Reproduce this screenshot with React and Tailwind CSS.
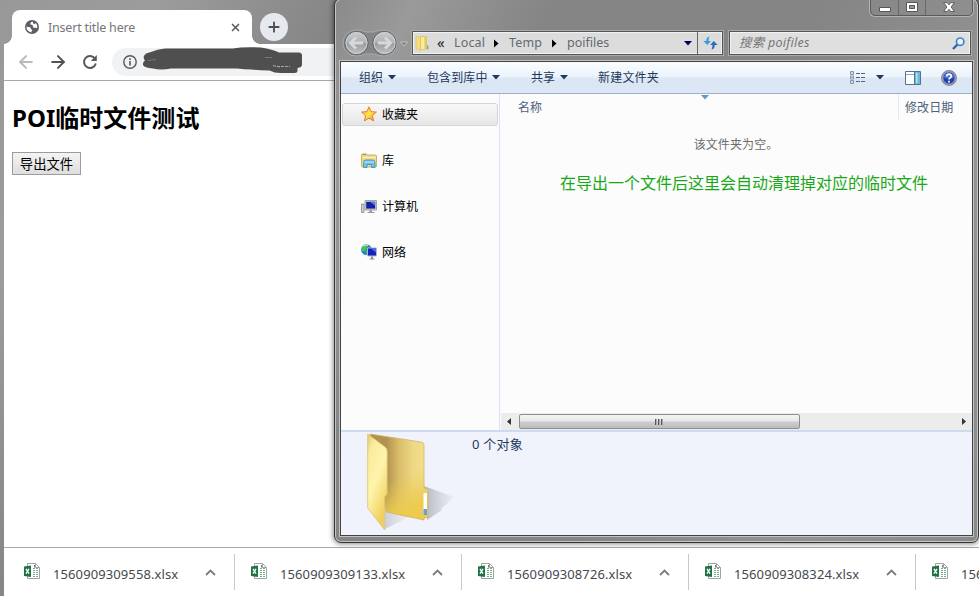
import { ArrowLeft, ArrowRight, Plus, X } from "lucide-react";

const downloads = [
  "1560909309558.xlsx",
  "1560909309133.xlsx",
  "1560909308726.xlsx",
  "1560909308324.xlsx",
  "1560909307915.xlsx",
];

const places = [
  { label: "收藏夹", icon: StarIcon, active: true },
  { label: "库", icon: LibraryIcon },
  { label: "计算机", icon: ComputerIcon },
  { label: "网络", icon: NetworkIcon },
];

/* ---------- icons ---------- */

function Caret({ className = "" }) {
  return (
    <svg className={`w-2 h-[5px] shrink-0 ${className}`} viewBox="0 0 8 5">
      <path d="M0 0h8L4 4.500z" fill="currentColor" />
    </svg>
  );
}

function CrumbArrow() {
  return (
    <svg className="w-[5px] h-[9px] shrink-0" viewBox="0 0 5 9">
      <path d="M0 0.5v8L4.5 4.5z" fill="#000" />
    </svg>
  );
}

function GlobeIcon() {
  return (
    <svg className="w-[14px] h-[14px] shrink-0" viewBox="0 0 14 14">
      <circle cx="7" cy="7" r="7" fill="#5a5f64" />
      <path d="M7.500 1.600C6 2.200 5 3.200 5.400 4.300c.6 1 1.900.3 2.400 1.100.5.8-.2 1.600.6 2.200.8.500 1.700-.2 2.600.2.7.3 1.100.4 1.300 0A5.600 5.600 0 0 0 10.800 3L9.600 4.300 8.300 3.600z" fill="#fff" />
      <path d="M1.500 6.400c1.200.7 2.900.1 3.800 1 .7.8.4 1.500 1.200 2 .9.500 1 1 .3 1.500-.5.400-.4.900-.3 1.500A5.500 5.500 0 0 1 1.500 6.400z" fill="#fff" />
    </svg>
  );
}

function ReloadIcon() {
  return (
    <svg className="w-[16px] h-[16px] shrink-0" viewBox="0 0 16 16" fill="none">
      <path d="M13 4.600A6 6 0 1 0 13.800 9.600" stroke="#55595e" strokeWidth="2" />
      <path d="M14.800 1v6H8.800z" fill="#55595e" />
    </svg>
  );
}

function InfoIcon() {
  return (
    <svg className="w-[14px] h-[14px] shrink-0" viewBox="0 0 14 14">
      <circle cx="7" cy="7" r="6.2" fill="none" stroke="#55595e" strokeWidth="1.4" />
      <path d="M6.2 6.1h1.6v4.4H6.2zM6.2 3.3h1.6v1.6H6.2z" fill="#55595e" />
    </svg>
  );
}

// marker scribble that hides the address
function Scribble() {
  return (
    <svg className="w-[160px] h-[27px] shrink-0" viewBox="0 0 160 27">
      <path
        d="M1 9Q2 6 8 5q6-3 14-3.500h68Q100-.5 118 .5q12 2 18 5h19.500q3.500 0 3.500 3v9q0 3-4.500 3.500v2.500q0 2.500-3 2.500h-14q-6 0-11-2.500-12 0-18-1-8 0-14-1H28q-10 2-18 0-9-1-10-3.500-.5-3 2-4.500-2-2-1-4.500z"
        fill="#4f4f4f"
      />
      <path d="M5 13.500l8-1M122 10.500h7" stroke="#7d7d7d" strokeWidth="0.9" fill="none" />
      <path d="M130 18.500q4 1.200 8 1h9" stroke="#a5a8ab" strokeWidth="1.200" strokeDasharray="3 1" fill="none" />
    </svg>
  );
}

function ExcelIcon() {
  return (
    <svg className="w-4 h-4 shrink-0" viewBox="0 0 16 16">
      <path d="M3.500.5h8l4 4v11h-12z" fill="#fff" stroke="#a3a3a3" />
      <path d="M11.500.5v4h4" fill="none" stroke="#a3a3a3" />
      <path d="M9 5.500h2M12 5.500h2M9 7.500h2M12 7.500h2M9 9.500h2M12 9.500h2M9 11.500h2M12 11.500h2M9 13.500h2M12 13.500h2" stroke="#73ad8a" />
      <path d="M10.500 2v2.500" stroke="#777" />
      <path d="M0 3.500l7-1v11.500L0 13z" fill="#217346" />
      <path d="M2 5.800l3 4.900M5 5.800L2 10.700" stroke="#fff" strokeWidth="1.300" />
    </svg>
  );
}

function ChevronUp() {
  return (
    <svg className="w-[11px] h-[7px] shrink-0" viewBox="0 0 11 7" fill="none">
      <path d="M1 6l4.500-4.500L10 6" stroke="#7b7b7b" strokeWidth="1.800" />
    </svg>
  );
}

function SmallFolder() {
  return (
    <svg className="w-[14px] h-4 shrink-0" viewBox="0 0 14 16">
      <path d="M5 1h6q1 0 1 1v8l1.500 1v3.500L5 15z" fill="#e6c65a" />
      <path d="M6 2h3.500v12H6z" fill="#f8eba5" />
      <path d="M1 1l4.500 2v12.500L1 13.500z" fill="#f3dd7c" stroke="#d9b64e" strokeWidth=".5" />
      <path d="M12 10.500h1.300v3.500H12z" fill="#5da7dc" />
    </svg>
  );
}

function StarIcon() {
  return (
    <svg className="w-4 h-4 shrink-0 -mt-[2px]" viewBox="0 0 16 16">
      <defs>
        <linearGradient id="star" x1="0" y1="0" x2="1" y2="1">
          <stop offset="0" stopColor="#ffa43a" />
          <stop offset=".5" stopColor="#ffe450" />
          <stop offset="1" stopColor="#f0851c" />
        </linearGradient>
      </defs>
      <path d="M8 .8l2.100 4.800 5.300.5-4 3.500 1.200 5.300L8 12.200l-4.600 2.700 1.200-5.300-4-3.500 5.300-.5z" fill="url(#star)" stroke="#e2752b" strokeWidth=".9" />
    </svg>
  );
}

function LibraryIcon() {
  return (
    <svg className="w-4 h-4 shrink-0" viewBox="0 0 16 16">
      <path d="M.5 2q0-1 1-1h4l1 1h8q1 0 1 1v10q0 1-1 1h-13q-1 0-1-1z" fill="#efd988" stroke="#cfb35c" />
      <path d="M2 1.500h3" stroke="#5fae57" />
      <path d="M1 4.500h14" stroke="#fbf0bb" />
      <path d="M2.500 14.500V9.500q0-2.500 2.500-2.500h6.500q2.500 0 2.500 2.500v5h-3.500V11.500H6v3z" fill="#6fbfea" stroke="#3c94c8" strokeWidth=".9" />
      <path d="M3.500 9h9.500" stroke="#cdeefa" />
    </svg>
  );
}

function ComputerIcon() {
  return (
    <svg className="w-4 h-4 shrink-0" viewBox="0 0 16 16">
      <path d="M.5 5h2.500v8.500H.5z" fill="#cfd2d2" stroke="#85898a" strokeWidth=".8" />
      <path d="M4 1.500h11.500v9.500H4z" fill="#d3d4d0" stroke="#92958f" strokeWidth=".8" />
      <path d="M5.200 2.800h9v6.800h-9z" fill="#1420a6" />
      <path d="M9 2.800h5.200v4z" fill="#5b7be8" />
      <path d="M8.500 11h2.500v2H8.500zM6.500 13h7v1h-7z" fill="#989b98" />
    </svg>
  );
}

function NetworkIcon() {
  return (
    <svg className="w-4 h-4 shrink-0 -mt-[2px]" viewBox="0 0 16 16">
      <circle cx="5.500" cy="5.700" r="5.400" fill="#2484d0" />
      <path d="M.7 4.500q1.500-4 5-4l2 1-2 2-1 3-3.500 1zM5 7l3-1 1 3-3 2z" fill="#45c845" />
      <path d="M2.500 2.200q2.500-2 4.500-1" stroke="#d7f1fb" fill="none" />
      <path d="M6.500 4h9v8h-9z" fill="#1523b8" stroke="#b3bac4" />
      <path d="M10 4.500h5v4z" fill="#4d6df0" />
      <path d="M10 12.500h2v2h-2zM8.500 14.500h5v1h-5z" fill="#8a909a" />
    </svg>
  );
}

function RefreshIcon() {
  return (
    <svg className="w-[15px] h-[14px]" viewBox="0 0 15 14">
      <path d="M6.500.5Q3.300 1 3.200 5H.3L4.300 9 8 5H5.600Q5.500 2.500 6.500.5z" fill="#3a9be0" />
      <path d="M8.500 13.500q3.300-.5 3.300-4.500h2.900L10.800 5 7.200 9h2.200q.2 2.500-.9 4.500z" fill="#2b6cbb" />
    </svg>
  );
}

function SearchIcon() {
  return (
    <svg className="w-[13px] h-[13px]" viewBox="0 0 13 13" fill="none">
      <circle cx="8.200" cy="4.700" r="3.700" fill="#e9f3f9" stroke="#3b87cc" strokeWidth="1.700" />
      <path d="M5.400 7.500L1 12" stroke="#2f5fae" strokeWidth="2.300" />
    </svg>
  );
}

function ViewIcon() {
  return (
    <svg className="w-4 h-[13px]" viewBox="0 0 16 13" fill="none">
      <path d="M.5.5h3v3h-3zM.5 5h3v3h-3zM.5 9.500h3v3h-3z" fill="#fff" stroke="#8295ae" />
      <path d="M1.500 1.500h1v1h-1z" fill="#4aa04a" />
      <path d="M1.500 6h1v1h-1z" fill="#d33a2c" />
      <path d="M1.500 10.500h1v1h-1z" fill="#3a70c0" />
      <path d="M6 2.500h4M11 2.500h4M6 6.500h4M11 6.500h4M6 10.500h4M11 10.500h4" stroke="#52677f" />
    </svg>
  );
}

function PaneIcon() {
  return (
    <svg className="w-4 h-[14px]" viewBox="0 0 16 14">
      <path d="M.5.5h15v13H.5z" fill="#fff" stroke="#54708f" />
      <path d="M1 3.500h8.500" stroke="#8fa4bc" />
      <path d="M10 1h5v12h-5z" fill="#6cbadb" />
      <path d="M11 2h1.500v10H11z" fill="#b2e2f2" />
      <path d="M9.500 1v12" stroke="#54708f" />
    </svg>
  );
}

function HelpIcon() {
  return (
    <svg className="w-4 h-4" viewBox="0 0 16 16" fill="none">
      <circle cx="8" cy="8" r="7.200" fill="#2340ac" stroke="#85868c" strokeWidth="1.500" />
      <circle cx="8" cy="8" r="6.200" stroke="#d5d9e6" strokeWidth=".7" />
      <path d="M2.800 7.500a5.300 5.300 0 0 1 10.400 0q-5 2-10.400 0z" fill="#5476d4" />
      <path d="M5.700 6.300Q5.900 4.200 8 4.200t2.300 1.900Q10.300 7.300 9 8q-1 .6-1 1.600" stroke="#fff" strokeWidth="1.700" />
      <path d="M7.100 10.800h1.800v1.700H7.100z" fill="#fff" />
    </svg>
  );
}

function NavButtons() {
  return (
    <svg className="w-[68px] h-7 -mt-px shrink-0" viewBox="0 0 68 28" fill="none">
      <defs>
        <linearGradient id="orb" x1="0" y1="0" x2="0" y2="1">
          <stop offset="0" stopColor="#cbcdce" />
          <stop offset=".48" stopColor="#b0b3b5" />
          <stop offset=".52" stopColor="#989c9f" />
          <stop offset="1" stopColor="#c0c5c9" />
        </linearGradient>
      </defs>
      <path d="M14 1Q20 1 24 3h8q4-2 10-2a12.800 12.800 0 0 1 0 26q-6 0-10-2h-8q-4 2-10 2a12.800 12.800 0 0 1 0-26z" fill="#858585" stroke="#aaa" />
      <circle cx="14.500" cy="14" r="11.600" fill="url(#orb)" stroke="#5d6369" />
      <circle cx="42.500" cy="14" r="11.600" fill="url(#orb)" stroke="#5d6369" />
      <circle cx="14.500" cy="14" r="10.500" stroke="#cfd1d3" />
      <circle cx="42.500" cy="14" r="10.500" stroke="#cfd1d3" />
      <path d="M21 14H9M14 8.500L8.500 14l5.500 5.500M36 14h12M43 8.500L48.500 14 43 19.500" stroke="#d6d8d9" strokeWidth="3" />
      <path d="M58.500 13h7l-3.500 4z" fill="#808080" stroke="#c6c6c6" strokeWidth=".9" />
    </svg>
  );
}

function BigFolder() {
  return (
    <svg className="w-[90px] h-[98px] mt-px ml-px shrink-0" viewBox="0 0 90 98">
      <defs>
        <linearGradient id="front" x1="0" y1="0" x2=".5" y2="1">
          <stop offset="0" stopColor="#e2c771" />
          <stop offset=".2" stopColor="#fbec9e" />
          <stop offset=".55" stopColor="#fff4ab" />
          <stop offset="1" stopColor="#efcf5c" />
        </linearGradient>
        <linearGradient id="back" x1="0" y1="0" x2="1" y2="0">
          <stop offset=".28" stopColor="#b1924e" />
          <stop offset=".5" stopColor="#dabd69" />
          <stop offset=".75" stopColor="#eed886" />
          <stop offset="1" stopColor="#f4e091" />
        </linearGradient>
        <linearGradient id="glow" x1="0" y1="0" x2=".3" y2="1">
          <stop offset=".6" stopColor="#edcb4e" stopOpacity="0" />
          <stop offset="1" stopColor="#eccb4e" />
        </linearGradient>
        <linearGradient id="shade" x1="0" y1="0" x2="1" y2="0">
          <stop offset="0" stopColor="#8c9096" stopOpacity=".6" />
          <stop offset="1" stopColor="#a9adb5" stopOpacity=".1" />
        </linearGradient>
      </defs>
      <path d="M57 53l30 11-13 12 1 1-15 10z" fill="url(#shade)" />
      <path d="M18 79l24 5-24 12z" fill="url(#shade)" opacity=".6" />
      <path d="M3 1l51 8q3 .5 3 3V55l4 2v27l-4 1v2L19 79z" fill="url(#back)" />
      <path d="M3 1l51 8q3 .5 3 3V55l4 2v27l-4 1v2L19 79z" fill="url(#glow)" stroke="#d3b568" strokeWidth=".8" />
      <path d="M56.500 60h3.500v22h-3.500z" fill="#fff" />
      <path d="M56.500 76h3.500v6h-3.500z" fill="#5d9ff0" />
      <path d="M.7 1l17.500 13q2 1.500 2 4v43l-2.500 3v33L.7 75z" fill="url(#front)" stroke="#d9c072" strokeWidth=".8" />
    </svg>
  );
}

/* ---------- browser ---------- */

function Browser() {
  return (
    <div className="flex flex-col h-full pl-1">
      {/* tab strip */}
      <div className="flex h-11 items-end shrink-0">
        <div className="w-2 h-2 bg-[radial-gradient(circle_at_0_0,transparent_7.500px,#fff_8px)]" />
        <div className="flex items-center w-[240px] h-[34px] rounded-t-lg bg-white pl-[13px] pr-[11px]">
          <GlobeIcon />
          <span className="ml-[9px] mt-[3px] flex-1 text-[12.5px] tracking-[-0.2px] text-[#73777b] whitespace-nowrap">Insert title here</span>
          <X className="w-[11px] h-[11px] text-[#5a5e63] scale-110" strokeWidth={3.2} />
        </div>
        <div className="w-2 h-2 bg-[radial-gradient(circle_at_100%_0,transparent_7.500px,#fff_8px)]" />
        <div className="flex items-center justify-center w-7 h-7 mb-[3px] rounded-full bg-[#e6e9ed] text-[#4c5055]">
          <Plus className="w-4 h-4" strokeWidth={2.8} />
        </div>
      </div>

      {/* toolbar */}
      <div className="flex items-center h-[37px] shrink-0 bg-white border-b border-[#aaa] pl-[12px]">
        <ArrowLeft className="w-5 h-5 text-[#b8babc]" strokeWidth={2.4} />
        <ArrowRight className="w-5 h-5 ml-3 text-[#505459]" strokeWidth={2.4} />
        <span className="ml-[14px]"><ReloadIcon /></span>
        <div className="flex items-center h-7 flex-1 ml-[14px] rounded-l-full bg-[#f0f2f4] pl-[11px]">
          <InfoIcon />
          <span className="ml-[6px] -mt-[3px]"><Scribble /></span>
        </div>
      </div>

      {/* page */}
      <div className="flex-1 bg-white pl-2 pt-[19px]">
        <h1 className="text-[24px] leading-[36px] font-bold text-black tracking-[0.02px]">POI临时文件测试</h1>
        <button className="mt-4 w-[69px] h-[23px] border border-[#9c9c9c] bg-linear-to-b from-[#f4f4f4] to-[#dedede] text-[13.33px] leading-[20px] text-black whitespace-nowrap">
          导出文件
        </button>
      </div>

      {/* download shelf */}
      <div className="flex h-[49px] shrink-0 bg-white border-t border-[#a9a9a9] overflow-hidden pt-[6px]">
        {downloads.map((name, i) => (
          <div
            key={name}
            className={`flex items-center shrink-0 h-9 border-r border-[#c8c8c8] ${i === 0 ? "w-[231px] pl-5" : "w-[227px] pl-4"}`}
          >
            <span className="-mt-[3px]"><ExcelIcon /></span>
            <span className="ml-[13px] w-[152px] text-[13px] tracking-[0.1px] text-[#45494d] whitespace-nowrap pt-[5px]">{name}</span>
            <ChevronUp />
          </div>
        ))}
      </div>
    </div>
  );
}

/* ---------- explorer window ---------- */

function CaptionButtons() {
  return (
    <div className="flex self-start ml-auto -mt-px h-[18px] rounded-b-[5px] border border-[#5a5a5a] shadow-[0_0_0_1px_#b4b4b4]">
      <div className="w-7 border-r border-[#686868] flex items-center justify-center">
        <svg className="w-3 h-[14px]" viewBox="0 0 12 14"><path d="M.5 7.500h11v4H.5z" fill="#fff" stroke="#56565f" /></svg>
      </div>
      <div className="w-[27px] border-r border-[#686868] flex items-center justify-center">
        <svg className="w-3 h-[11px]" viewBox="0 0 12 11"><path d="M.5.5h11v9H.5z" fill="#fff" stroke="#56565f" /><path d="M3.500 3.500h5v3h-5z" fill="#999" stroke="#56565f" /></svg>
      </div>
      <div className="w-[46px] flex items-center justify-center">
        <svg className="w-3 h-[11px]" viewBox="0 0 12 11">
          <path d="M.7.6h3.600L6 2.800 7.700.6h3.600L8.200 5l3.100 4.500H7.700L6 7.300 4.300 9.500H.7L3.800 5z" fill="#fff" stroke="#56565f" strokeWidth=".9" />
        </svg>
      </div>
    </div>
  );
}

function Explorer() {
  return (
    <div className="absolute left-[334px] -top-[2px] w-[645px] h-[545px] flex flex-col px-[5px] pb-[6px] rounded-[7px] border border-[#333] bg-[linear-gradient(115deg,#8a8a8a_0%,#9a9a9a_9%,#858585_24%,#858585_55%,#939393_80%,#8a8a8a_100%)] shadow-[inset_0_0_0_1px_#c6c6c6,0_0_5px_1px_#0007]">
      <div className="flex flex-col h-[62px] shrink-0">
        <div className="flex h-[31px]">
          <CaptionButtons />
        </div>
        <div className="flex items-start pl-[2px]">
          <NavButtons />
          <div className="flex items-center mt-px w-[311px] h-6 ml-[2px] border border-[#555] bg-[#dcdcdc] shadow-[0_0_0_1px_#aaa,inset_0_0_0_1px_#f2f2f2] pl-[2px] text-[12.5px] text-[#646a6f] whitespace-nowrap">
            <SmallFolder />
            <span className="ml-2 w-[17px] text-[15px] leading-5 text-[#222] -mt-[3px]">«</span>
            <span className="w-10 tracking-[0.15px]">Local</span>
            <CrumbArrow />
            <span className="ml-[10px] w-[43px] tracking-[0.15px]">Temp</span>
            <CrumbArrow />
            <span className="ml-[10px] flex-1">poifiles</span>
            <Caret className="text-[#000060] mr-[5px]" />
            <div className="flex items-center justify-center w-[25px] h-[22px] border-l border-[#666]">
              <RefreshIcon />
            </div>
          </div>
          <div className="flex items-center mt-px w-[242px] h-6 ml-[6px] border border-[#555] bg-[#dfdfdf] shadow-[0_0_0_1px_#aaa,inset_0_0_0_1px_#f2f2f2] pl-[9px] pr-[5px] text-[12.5px] text-[#777]">
            <span className="flex-1 italic whitespace-nowrap tracking-[0.25px]">搜索 poifiles</span>
            <SearchIcon />
          </div>
        </div>
      </div>

      <div className="flex flex-col flex-1 min-h-0 w-[633px] border border-[#444] shadow-[0_0_0_1px_#c2c2c2] bg-[#fcfcfc] text-[12px] whitespace-nowrap">
        {/* command bar */}
        <div className="flex items-center h-8 shrink-0 border-b border-[#a0afc9] bg-[linear-gradient(#fafdff_0%,#eaf3fc_48%,#dce6f4_52%,#dbe7f7_100%)] text-[#1e395b] pl-[18px] pr-[15px]">
          <span className="w-[29px]">组织</span><Caret />
          <span className="ml-[31px] w-[65px] tracking-[0.1px]">包含到库中</span><Caret />
          <span className="ml-[31px] w-[29px]">共享</span><Caret />
          <span className="ml-[30px] tracking-[0.2px]">新建文件夹</span>
          <span className="ml-auto"><ViewIcon /></span>
          <Caret className="ml-[10px]" />
          <span className="ml-[21px]"><PaneIcon /></span>
          <span className="ml-5"><HelpIcon /></span>
        </div>

        <div className="flex flex-1 min-h-0">
          {/* places */}
          <div className="w-[159px] shrink-0 border-r border-[#d5e3f3] pt-[9px] pl-[1px] pr-[1px] text-black">
            {places.map(({ label, icon: Icon, active }) => (
              <div
                key={label}
                className={`flex items-center h-[23px] mb-[23px] pl-[18px] gap-[5px] rounded-[3px] border ${
                  active ? "border-[#d5d5d5] bg-linear-to-b from-[#f9f9f9] to-[#e6e6e6]" : "border-transparent"
                }`}
              >
                <Icon />
                <span>{label}</span>
              </div>
            ))}
          </div>

          {/* file list */}
          <div className="flex flex-col flex-1 min-w-0">
            <div className="flex h-[25px] text-[#4c607a] leading-[27px]">
              <div className="flex w-[399px] pl-[18px] border-r border-[#dfebf8]">
                <span>名称</span>
                <Caret className="ml-[159px] mt-px text-[#5a9fc2] h-1" />
              </div>
              <span className="pl-[6px] tracking-[0.1px]">修改日期</span>
            </div>
            <div className="mt-[17px] text-center leading-[18px] text-[#6d6d6d] tracking-[0.1px]">该文件夹为空。</div>
            <div className="mt-[15px] pl-[60px] text-[16px] leading-[28px] text-[#18a818]">在导出一个文件后这里会自动清理掉对应的临时文件</div>
            <div className="flex items-center mt-auto h-[17px] ml-px bg-[#ececec]">
              <div className="w-[18px] flex justify-center pr-[2px]">
                <svg className="w-1 h-[7px]" viewBox="0 0 4 7"><path d="M4 0v7L0 3.500z" fill="#333" /></svg>
              </div>
              <div className="flex items-center justify-center gap-[2px] pr-[2px] w-[281px] h-[15px] rounded-[2px] border border-[#8e8e8e] bg-[linear-gradient(#f5f5f5_0%,#e7e7e7_48%,#cfcfd1_52%,#bcbcbf_100%)]">
                <i className="w-px h-[6px] bg-[#555] shadow-[1px_0_0_#aaa]" />
                <i className="w-px h-[6px] bg-[#555] shadow-[1px_0_0_#aaa]" />
                <i className="w-px h-[6px] bg-[#555] shadow-[1px_0_0_#aaa]" />
              </div>
              <svg className="w-1 h-[7px] ml-auto mr-[6px]" viewBox="0 0 4 7"><path d="M0 0v7l4-3.500z" fill="#333" /></svg>
            </div>
          </div>
        </div>

        {/* details pane */}
        <div className="flex h-[105px] shrink-0 border-t-2 border-[#cbdcf0] bg-[#f0f3fc] pl-[25px]">
          <BigFolder />
          <span className="ml-[15px] mt-[3px] text-[13px] leading-[18px] text-[#1e395b] tracking-[0.25px]">0 个对象</span>
        </div>
      </div>
    </div>
  );
}

export default function App() {
  return (
    <div className="relative w-[979px] h-[596px] overflow-hidden bg-[linear-gradient(120deg,#989898_0%,#9c9c9c_12%,#868686_26%,#8e8e8e_40%,#888_100%)] font-['Noto_Sans','Noto_Sans_CJK_SC',sans-serif]">
      <Browser />
      <Explorer />
    </div>
  );
}
